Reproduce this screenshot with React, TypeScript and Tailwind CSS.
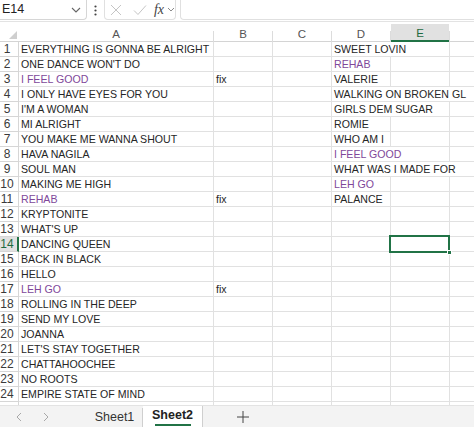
import React from "react";

const colA: [string, boolean][] = [
  ["EVERYTHING IS GONNA BE ALRIGHT", false],
  ["ONE DANCE WON'T DO", false],
  ["I FEEL GOOD", true],
  ["I ONLY HAVE EYES FOR YOU", false],
  ["I'M A WOMAN", false],
  ["MI ALRIGHT", false],
  ["YOU MAKE ME WANNA SHOUT", false],
  ["HAVA NAGILA", false],
  ["SOUL MAN", false],
  ["MAKING ME HIGH", false],
  ["REHAB", true],
  ["KRYPTONITE", false],
  ["WHAT'S UP", false],
  ["DANCING QUEEN", false],
  ["BACK IN BLACK", false],
  ["HELLO", false],
  ["LEH GO", true],
  ["ROLLING IN THE DEEP", false],
  ["SEND MY LOVE", false],
  ["JOANNA", false],
  ["LET'S STAY TOGETHER", false],
  ["CHATTAHOOCHEE", false],
  ["NO ROOTS", false],
  ["EMPIRE STATE OF MIND", false],
  ["", false],
];

const colD: [string, boolean][] = [
  ["SWEET LOVIN", false],
  ["REHAB", true],
  ["VALERIE", false],
  ["WALKING ON BROKEN GL", false],
  ["GIRLS DEM SUGAR", false],
  ["ROMIE", false],
  ["WHO AM I", false],
  ["I FEEL GOOD", true],
  ["WHAT WAS I MADE FOR", false],
  ["LEH GO", true],
  ["PALANCE", false],
];

const fixRows = new Set([3, 11, 17]);

function Cell({
  w,
  text,
  purple,
  selected,
}: {
  w: string;
  text?: string;
  purple?: boolean;
  selected?: boolean;
}) {
  return (
    <div
      className={`${w} relative h-[15px] shrink-0 border-r border-b border-[#e1e1e1] overflow-visible`}
    >
      {text ? (
        <span
          className={`relative z-10 block whitespace-nowrap bg-white pl-[2px] pr-[2px] w-max h-[14px] leading-[15px] text-[10.6px] ${
            purple ? "text-[#80479a]" : "text-[#262626]"
          }`}
        >
          {text}
        </span>
      ) : null}
      {selected ? (
        <div className="absolute z-20 left-[-2px] top-[-2px] w-[61px] h-[18px] border-2 border-[#217346]">
          <div className="absolute right-[-4px] bottom-[-4px] w-[5px] h-[5px] bg-[#217346] border border-white" />
        </div>
      ) : null}
    </div>
  );
}

export default function App() {
  const font = { fontFamily: '"Liberation Sans", Arial, sans-serif' };
  return (
    <div
      className="w-[474px] h-[427px] overflow-hidden bg-white flex flex-col text-[#262626]"
      style={font}
    >
      {/* Formula bar */}
      <div className="h-[22px] shrink-0 flex items-start border-b border-[#e3e3e3]">
        <div className="w-[87px] h-[20px] shrink-0 flex items-center justify-between border-r border-b border-[#d6d6d6] rounded-br-[4px] pl-[2px] pr-[4px]">
          <span className="text-[12.5px] leading-none text-[#222]">E14</span>
          <svg width="10" height="6" viewBox="0 0 10 6" className="mr-[1px]">
            <path d="M1 1 L5 5 L9 1" fill="none" stroke="#666" strokeWidth="1.1" />
          </svg>
        </div>
        <div className="w-[17px] h-[20px] shrink-0 flex items-center justify-center">
          <svg width="3" height="11" viewBox="0 0 3 11">
            <circle cx="1.5" cy="1.5" r="1.1" fill="#444" />
            <circle cx="1.5" cy="5.5" r="1.1" fill="#444" />
            <circle cx="1.5" cy="9.5" r="1.1" fill="#444" />
          </svg>
        </div>
        <div className="w-[72px] h-[20px] shrink-0 flex items-center border-l border-r border-b border-[#e0e0e0] rounded-b-[4px] pl-[5px]">
          <svg width="12" height="12" viewBox="0 0 12 12">
            <path d="M1 1 L11 11 M11 1 L1 11" stroke="#c4c4c4" strokeWidth="1" fill="none" />
          </svg>
          <svg width="14" height="12" viewBox="0 0 14 12" className="ml-[11px]">
            <path d="M1 6.5 L5 10.5 L13 1.5" stroke="#c4c4c4" strokeWidth="1" fill="none" />
          </svg>
          <span
            className="ml-[7px] text-[14px] leading-none italic text-[#444]"
            style={{ fontFamily: '"Liberation Serif", "Times New Roman", serif' }}
          >
            fx
          </span>
          <svg width="8" height="5" viewBox="0 0 8 5" className="ml-[3px]">
            <path d="M1 1 L4 4 L7 1" fill="none" stroke="#888" strokeWidth="1" />
          </svg>
        </div>
        <div className="flex-1 h-[20px] ml-[4px] border-l border-b border-[#e0e0e0] rounded-bl-[4px]" />
      </div>

      {/* Column headers */}
      <div className="h-[20px] shrink-0 flex items-end text-[11.5px] text-[#555]">
        <div className="w-[19px] h-[18px] shrink-0 flex items-end justify-end pr-[2px] pb-[2px] border-b border-[#d4d4d4]">
          <svg width="8" height="8" viewBox="0 0 8 8">
            <path d="M8 0 L8 8 L0 8 Z" fill="#cfcfcf" />
          </svg>
        </div>
        {[
          ["A", "w-[194px]"],
          ["B", "w-[58px]"],
          ["C", "w-[58px]"],
          ["D", "w-[58px]"],
          ["E", "w-[58px]"],
          ["", "w-[58px]"],
        ].map(([l, w], i) => (
          <div key={i} className="h-[18px] shrink-0 flex items-end">
            <div
              className={`${w} h-[18px] flex items-end justify-center pb-[1px] leading-none ${
                l === "E"
                  ? "bg-[#e1e1e1] border-b-2 border-[#217346] text-[#1e6a40]"
                  : "border-b border-[#d4d4d4]"
              }`}
            >
              {l}
            </div>
            <div className="w-px h-[11px] bg-[#dcdcdc]" />
          </div>
        ))}
      </div>

      {/* Grid */}
      <div className="h-[363px] shrink-0 overflow-hidden flex flex-col">
        {colA.map(([a, ap], i) => {
          const r = i + 1;
          const d = colD[i];
          const active = r === 14;
          return (
            <div key={r} className="h-[15px] shrink-0 flex">
              <div
                className={`w-[19px] h-[15px] shrink-0 border-b border-r flex items-center text-[12px] leading-none ${
                  active
                    ? "bg-[#e1e1e1] text-[#1e6a40] border-r-2 border-r-[#217346] border-b-[#d6d6d6]"
                    : "border-[#d6d6d6] text-[#3a3a3a]"
                }`}
              >
                <span className="w-[14px] text-center whitespace-nowrap">{r <= 24 ? r : ""}</span>
              </div>
              <Cell w="w-[195px]" text={a} purple={ap} />
              <Cell w="w-[59px]" text={fixRows.has(r) ? "fix" : ""} />
              <Cell w="w-[59px]" />
              <Cell w="w-[59px]" text={d ? d[0] : ""} purple={d ? d[1] : false} />
              <Cell w="w-[59px]" selected={active} />
              <Cell w="w-[59px]" />
            </div>
          );
        })}
      </div>

      {/* Sheet tabs */}
      <div className="flex-1 flex items-stretch bg-[#f3f3f3] border-t border-[#e3e3e3]">
        <div className="w-[87px] shrink-0 flex items-center text-[#a8a8a8]">
          <svg width="6" height="10" viewBox="0 0 6 10" className="ml-[16px]">
            <path d="M5 1 L1 5 L5 9" fill="none" stroke="#a8a8a8" strokeWidth="1" />
          </svg>
          <svg width="6" height="10" viewBox="0 0 6 10" className="ml-[21px]">
            <path d="M1 1 L5 5 L1 9" fill="none" stroke="#a8a8a8" strokeWidth="1" />
          </svg>
        </div>
        <div className="w-[56px] shrink-0 flex items-end justify-center pb-[2px] text-[12.5px] text-[#333] border-r border-[#cfcfcf] my-[2px] mb-0">
          Sheet1
        </div>
        <div className="w-[60px] shrink-0 bg-white flex flex-col items-center justify-start pt-[2px] border-r border-[#cfcfcf]">
          <span className="text-[12.5px] text-[#222] font-semibold leading-[15px]">Sheet2</span>
          <div className="w-[36px] h-[2px] bg-[#217346] mt-[1px]" />
        </div>
        <div className="flex items-center pl-[34px]">
          <svg width="12" height="12" viewBox="0 0 12 12">
            <path d="M6 0 L6 12 M0 6 L12 6" stroke="#444" strokeWidth="1" />
          </svg>
        </div>
      </div>
    </div>
  );
}
